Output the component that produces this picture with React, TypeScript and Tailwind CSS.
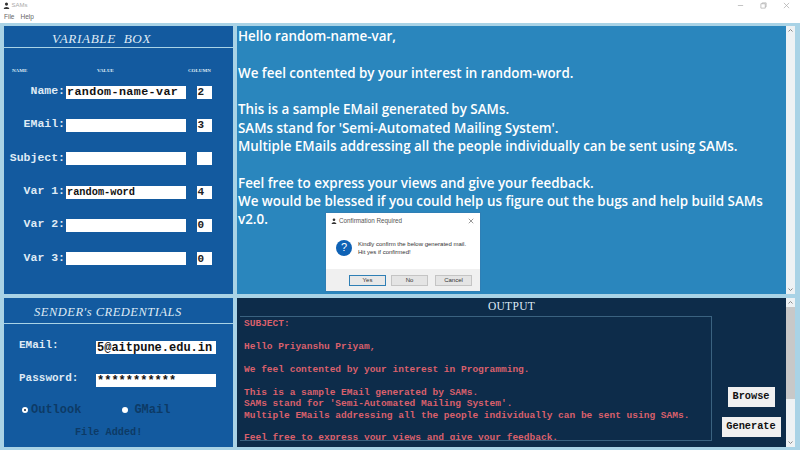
const mono = "font-['Liberation_Mono',monospace]";
const rows = [
  ["Name:", "random-name-var", "2", "text-[11.700px] tracking-[0.4px] pt-px"],
  ["EMail:", "", "3", ""],
  ["Subject:", "", "", ""],
  ["Var 1:", "random-word", "4", "text-[10.300px] pt-[2px]"],
  ["Var 2:", "", "0", ""],
  ["Var 3:", "", "0", ""],
];
function Row({ label, value, col, cls }: { label: string; value: string; col: string; cls: string }) {
  return (
    <div className="flex h-[13px] items-center">
      <div className={`w-[61px] shrink-0 whitespace-nowrap pb-[3px] text-right text-[11.500px] font-bold text-[#dfeaf5] ${mono}`}>{label}</div>
      <div className={`ml-px flex h-[13px] w-[120px] items-center overflow-hidden whitespace-nowrap bg-white pl-px font-bold text-[#111] ${mono} ${cls}`}>{value}</div>
      <div className={`ml-[10.500px] flex h-[13px] w-[15.500px] items-center bg-white pl-px text-[11px] font-bold text-[#222] ${mono}`}>{col}</div>
    </div>
  );
}
const mail = ["SUBJECT:", "", "Hello Priyanshu Priyam,", "", "We feel contented by your interest in Programming.", "", "This is a sample EMail generated by SAMs.", "SAMs stand for 'Semi-Automated Mailing System'.", "Multiple EMails addressing all the people individually can be sent using SAMs.", "", "Feel free to express your views and give your feedback."];
const body = ["Hello random-name-var,", "", "We feel contented by your interest in random-word.", "", "This is a sample EMail generated by SAMs.", "SAMs stand for 'Semi-Automated Mailing System'.", "Multiple EMails addressing all the people individually can be sent using SAMs.", "", "Feel free to express your views and give your feedback.", "We would be blessed if you could help us figure out the bugs and help build SAMs", "v2.0."];
function Scroll({ thumb }: { thumb: boolean }) {
  return (
    <div className="flex h-full w-[9px] shrink-0 flex-col bg-[#eef2f4]">
      <svg viewBox="0 0 9 9" className="h-[9px] w-[9px] shrink-0"><path d="M2.500 5.500l2-2 2 2" fill="none" stroke="#888" strokeWidth="1" /></svg>
      {thumb && <div className="h-[92px] bg-[#c8c8c8]" />}
      <div className="flex-1" />
      <svg viewBox="0 0 9 9" className="h-[9px] w-[9px] shrink-0"><path d="M2.500 3.500l2 2 2-2" fill="none" stroke="#888" strokeWidth="1" /></svg>
    </div>
  );
}
export default function App() {
  return (
    <div className="relative flex h-[450px] w-[800px] flex-col overflow-hidden bg-[#a9d3e6] font-['Liberation_Sans',sans-serif]">
      <div className="flex h-[11px] items-center bg-white pl-[3px] text-[6px] text-[#aaa]">
        <svg viewBox="0 0 10 10" className="h-[7px] w-[7px]"><circle cx="5" cy="3" r="2.200" fill="#333" /><path d="M1 10c0-4 8-4 8 0z" fill="#333" /></svg>
        <span className="ml-[1.500px]">SAMs</span>
        <div className="ml-auto flex items-center gap-[16px] pr-[10px]">
          <svg viewBox="0 0 8 8" className="h-[7px] w-[7px]"><path d="M1 4h6" stroke="#aaa" strokeWidth="0.800" /></svg>
          <svg viewBox="0 0 8 8" className="h-[7px] w-[7px]"><path d="M1 2h5v5H1zM2.500 2V1H7v4.500H6" fill="none" stroke="#aaa" strokeWidth="0.800" /></svg>
          <svg viewBox="0 0 8 8" className="h-[7px] w-[7px]"><path d="M1 1l6 6M7 1L1 7" stroke="#aaa" strokeWidth="0.800" /></svg>
        </div>
      </div>
      <div className="flex h-[12px] items-center gap-[6px] bg-white pl-[4px] text-[6.500px] text-[#666]">
        <span>File</span><span>Help</span>
      </div>
      <div className="flex flex-1 gap-[4px] pb-[3px] pl-[4px] pr-[5px] pt-[3px]">
        <div className="flex w-[229px] shrink-0 flex-col gap-[4px]">
          <section className="flex h-[268px] flex-col bg-[#135a9f]">
            <div className="h-[21.500px] whitespace-pre border-b border-[#a9d3e6] pl-[48px] pt-[6px] font-['Liberation_Serif',serif] text-[13.200px] italic leading-[14px] tracking-[0.6px] text-[#dfeaf5]">VARIABLE  BOX</div>
            <div className="mt-[19px] flex h-[8px] items-center font-['Liberation_Serif',serif] text-[5px] font-bold text-[#dfeaf5]">
              <span className="ml-[8px] w-[85px]">NAME</span>
              <span className="w-[91px]">VALUE</span>
              <span>COLUMN</span>
            </div>
            <div className="mt-[11px] flex flex-col gap-[20.400px]">
              {rows.map((r) => <Row key={r[0]} label={r[0]} value={r[1]} col={r[2]} cls={r[3]} />)}
            </div>
          </section>
          <section className="flex flex-1 flex-col bg-[#135a9f]">
            <div className="h-[26px] whitespace-nowrap border-b border-[#a9d3e6] pl-[30px] pt-[7px] font-['Liberation_Serif',serif] text-[12.500px] italic leading-[14px] tracking-[0.5px] text-[#dfeaf5]">SENDER's CREDENTIALS</div>
            <div className={`mt-[16px] flex h-[14px] items-center pl-[15px] ${mono}`}>
              <span className="w-[77px] pb-[3px] text-[11px] font-bold text-[#dfeaf5]">EMail:</span>
              <div className="flex h-[13px] w-[120px] items-center overflow-hidden whitespace-nowrap bg-white pl-px pt-px text-[12px] font-bold text-[#111]">5@aitpune.edu.in</div>
            </div>
            <div className={`mt-[19px] flex h-[14px] items-center pl-[15px] ${mono}`}>
              <span className="w-[77px] pb-[3px] text-[11px] font-bold text-[#dfeaf5]">Password:</span>
              <div className="flex h-[13px] w-[120px] items-center bg-white pl-px pt-px text-[12px] font-bold text-[#111]">***********</div>
            </div>
            <div className={`mt-[16px] flex h-[14px] items-center pl-[15px] text-[12px] font-bold text-[#0d3a66] ${mono}`}>
              <span className="ml-[3px] flex h-[6px] w-[6px] items-center justify-center rounded-full bg-white"><span className="h-[2.500px] w-[2.500px] rounded-full bg-[#123]" /></span>
              <span className="ml-[3px]">Outlook</span>
              <span className="ml-[41px] h-[6px] w-[6px] rounded-full bg-white" />
              <span className="ml-[6px]">GMail</span>
            </div>
            <div className={`mt-[10px] pl-[71px] text-[10.200px] font-bold leading-[12px] text-[#0d3a66] ${mono}`}>File Added!</div>
          </section>
        </div>
        <div className="flex flex-1 flex-col gap-[4px]">
          <section className="flex h-[268px] bg-[#2a86bd]">
            <div className="flex-1 pl-px pt-px font-['Open_Sans',sans-serif] text-[13.400px] font-semibold leading-[18.350px] text-white">
              {body.map((l, i) => <div key={i} className="h-[18.350px] whitespace-nowrap">{l}</div>)}
            </div>
            <Scroll thumb={false} />
          </section>
          <section className="flex flex-1 bg-[#0d2c4a]">
            <div className="flex min-w-0 flex-1 flex-col">
              <div className="h-[18px] text-center font-['Liberation_Serif',serif] text-[11.500px] leading-[17px] tracking-[0.3px] text-[#dfeaf5]">OUTPUT</div>
              <div className="flex h-[125px]">
                <div className={`ml-[3px] h-[125px] w-[472px] overflow-hidden border-y border-r border-[#3a6280] pl-[4px] pt-[1px] text-[9.530px] font-bold leading-[11.450px] text-[#d9606c] ${mono}`}>
                  {mail.map((l, i) => <div key={i} className="h-[11.450px] whitespace-nowrap">{l}</div>)}
                </div>
                <div className="flex flex-1 flex-col items-center justify-end gap-[10px] pb-[4px] pl-[4px]">
                  <div className={`flex h-[20px] w-[47px] items-center justify-center bg-[#f0f0f0] text-[10.300px] font-bold text-[#111] ${mono}`}>Browse</div>
                  <div className={`flex h-[20px] w-[59px] items-center justify-center bg-[#f0f0f0] text-[10.300px] font-bold text-[#111] ${mono}`}>Generate</div>
                </div>
              </div>
            </div>
            <Scroll thumb />
          </section>
        </div>
      </div>
      <div className="absolute left-[325px] top-[212px] flex h-[80px] w-[156px] flex-col border border-[#2f7fb5] bg-white text-[#333]">
        <div className="flex h-[15px] items-center px-[5px] text-[6.300px] text-[#555]">
          <svg viewBox="0 0 10 10" className="mr-[2px] h-[6px] w-[6px]"><circle cx="5" cy="3" r="2.200" fill="#333" /><path d="M1 10c0-4 8-4 8 0z" fill="#333" /></svg>
          Confirmation Required
          <svg viewBox="0 0 8 8" className="ml-auto mr-px h-[6px] w-[6px]"><path d="M1 1l6 6M7 1L1 7" stroke="#555" strokeWidth="0.800" /></svg>
        </div>
        <div className="flex flex-1 items-center pb-[2px] pl-[10px]">
          <div className="flex h-[16px] w-[16px] items-center justify-center rounded-full bg-[#0f62b5] text-[11px] text-white">?</div>
          <div className="ml-[6px] text-[6px] leading-[8px] text-[#333]">Kindly confirm the below generated mail.<br />Hit yes if confirmed!</div>
        </div>
        <div className="flex h-[22px] items-center gap-[5px] bg-[#f0f0f0] pl-[23px] text-[6px]">
          <div className="flex h-[11px] w-[37px] items-center justify-center border border-[#2f7fb5] bg-[#e8e8e8]">Yes</div>
          <div className="flex h-[11px] w-[37px] items-center justify-center border border-[#c4c4c4] bg-[#e4e4e4]">No</div>
          <div className="ml-[2px] flex h-[11px] w-[37px] items-center justify-center border border-[#c4c4c4] bg-[#e4e4e4]">Cancel</div>
        </div>
      </div>
    </div>
  );
}
